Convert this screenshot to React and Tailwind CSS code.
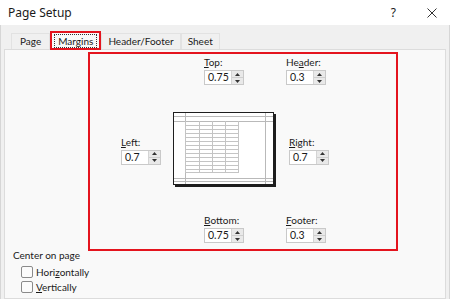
import React from 'react';

const font = { fontFamily: 'Lato, "Noto Sans", sans-serif' };
const titleFont = { fontFamily: '"Noto Sans", sans-serif' };

function Spin({ value }) {
  return (
    <div className="flex h-[15px] w-[40px] border border-[#c9c9c9] bg-white">
      <div className="flex-1 pl-[3px] text-[10.5px] leading-[13px] text-[#1a1a1a]">{value}</div>
      <div className="flex w-[12px] flex-col border-l border-[#d4d4d4] bg-[#e9e9e9]">
        <div className="flex flex-1 items-center justify-center border-b border-[#cfcfcf]">
          <svg width="5" height="3" viewBox="0 0 5 3"><path d="M0 3 L2.5 0 L5 3 Z" fill="#333" /></svg>
        </div>
        <div className="flex flex-1 items-center justify-center">
          <svg width="5" height="3" viewBox="0 0 5 3"><path d="M0 0 L2.5 3 L5 0 Z" fill="#333" /></svg>
        </div>
      </div>
    </div>
  );
}

function Field({ pre, u, post, value }) {
  return (
    <div className="flex flex-col">
      <div className="h-[14px] leading-[13px] text-[#1a1a1a]">
        {pre}<span className="underline">{u}</span>{post}
      </div>
      <Spin value={value} />
    </div>
  );
}

function Preview() {
  const cols = [12, 26, 39, 52, 65];
  const rows = [];
  for (let y = 13; y <= 60; y += 4) rows.push(y);
  return (
    <svg width="104" height="76" viewBox="0 0 104 76">
      <rect x="2" y="2" width="101" height="73" fill="#1e1e1e" />
      <rect x="0.5" y="0.5" width="100" height="72" fill="#fff" stroke="#1e1e1e" />
      {[4.5, 9.5, 66.5, 69.5].map(y => (
        <line key={y} x1="1" x2="100" y1={y} y2={y} stroke="#b9b9b9" strokeWidth="1" />
      ))}
      {[12.5, 92.5].map(x => (
        <line key={x} x1={x} x2={x} y1="1" y2="72" stroke="#b9b9b9" strokeWidth="1" />
      ))}
      {rows.map(y => (
        <line key={'r' + y} x1="12" x2="65" y1={y + 0.5} y2={y + 0.5} stroke="#c4c4c4" strokeWidth="1" />
      ))}
      {cols.map(x => (
        <line key={'c' + x} x1={x + 0.5} x2={x + 0.5} y1="9" y2="61" stroke="#c4c4c4" strokeWidth="1" />
      ))}
      <line x1="12" x2="65" y1="60.5" y2="60.5" stroke="#c4c4c4" />
    </svg>
  );
}

function Tab({ children, active, wide }) {
  if (active) {
    return (
      <div className="relative z-10 -mb-px flex h-[19px] items-center border-2 border-[#e4141e] bg-[#f9f9f9] px-[2px]">
        <span className="border border-dotted border-[#333] px-[3px] leading-[12px]">{children}</span>
      </div>
    );
  }
  return (
    <div className={wide
      ? 'mt-[2px] flex h-[16px] items-center border border-b-0 border-[#e2e2e2] bg-[#f0f0f0] px-[8px]'
      : 'mt-[2px] flex h-[16px] items-center border border-b-0 border-[#e2e2e2] bg-[#f0f0f0] px-[6px]'}>
      {children}
    </div>
  );
}

export default function App() {
  return (
    <div className="h-[299px] w-[450px] overflow-hidden bg-[#f0f0f0] text-[10px] text-[#1a1a1a]" style={font}>
      {/* title bar */}
      <div className="flex h-[25px] items-center bg-white pl-[8px] pr-[13px] text-[12px]" style={titleFont}>
        <span className="flex-1">Page Setup</span>
        <span className="mr-[31px] text-[12px]">?</span>
        <svg width="10" height="10" viewBox="0 0 10 10">
          <path d="M0.5 0.5 L9.5 9.5 M9.5 0.5 L0.5 9.5" stroke="#333" strokeWidth="1" />
        </svg>
      </div>

      <div className="flex h-[274px] border-l border-r border-[#d6d6d6] pl-[3px] pr-[3px]">
        <div className="flex flex-1 flex-col pt-[6px]">
          {/* tabs */}
          <div className="flex items-end pl-[7px]">
            <Tab wide>Page</Tab>
            <Tab active>Margins</Tab>
            <Tab>Header/Footer</Tab>
            <Tab>Sheet</Tab>
          </div>

          {/* panel */}
          <div className="flex flex-1 flex-col border border-[#dcdcdc] bg-[#f9f9f9] pl-[83px] pr-[40px] pt-[2px]">
            <div className="flex h-[199px] w-[310px] flex-col border-2 border-[#e4141e] pt-[2px]">
              <div className="flex gap-[42px] pl-[114px]">
                <Field pre="" u="T" post="op:" value="0.75" />
                <Field pre="He" u="a" post="der:" value="0.3" />
              </div>
              <div className="mt-[27px] flex items-center gap-[12px] pl-[31px]">
                <Field pre="" u="L" post="eft:" value="0.7" />
                <Preview />
                <Field pre="" u="R" post="ight:" value="0.7" />
              </div>
              <div className="mt-[26px] flex gap-[42px] pl-[114px]">
                <Field pre="" u="B" post="ottom:" value="0.75" />
                <Field pre="" u="F" post="ooter:" value="0.3" />
              </div>
            </div>

            <div className="-ml-[75px] -mt-[3px] leading-[14px]">Center on page</div>
            <div className="-ml-[67px] mt-[4px] flex flex-col gap-[3px]">
              <label className="flex h-[12px] items-center gap-[3px]">
                <span className="h-[12px] w-[12px] rounded-[2px] border border-[#8a8a8a] bg-[#fbfbfb]" />
                <span>Hori<span className="underline">z</span>ontally</span>
              </label>
              <label className="flex h-[12px] items-center gap-[3px]">
                <span className="h-[12px] w-[12px] rounded-[2px] border border-[#8a8a8a] bg-[#fbfbfb]" />
                <span><span className="underline">V</span>ertically</span>
              </label>
            </div>
          </div>
        </div>
      </div>
    </div>
  );
}
